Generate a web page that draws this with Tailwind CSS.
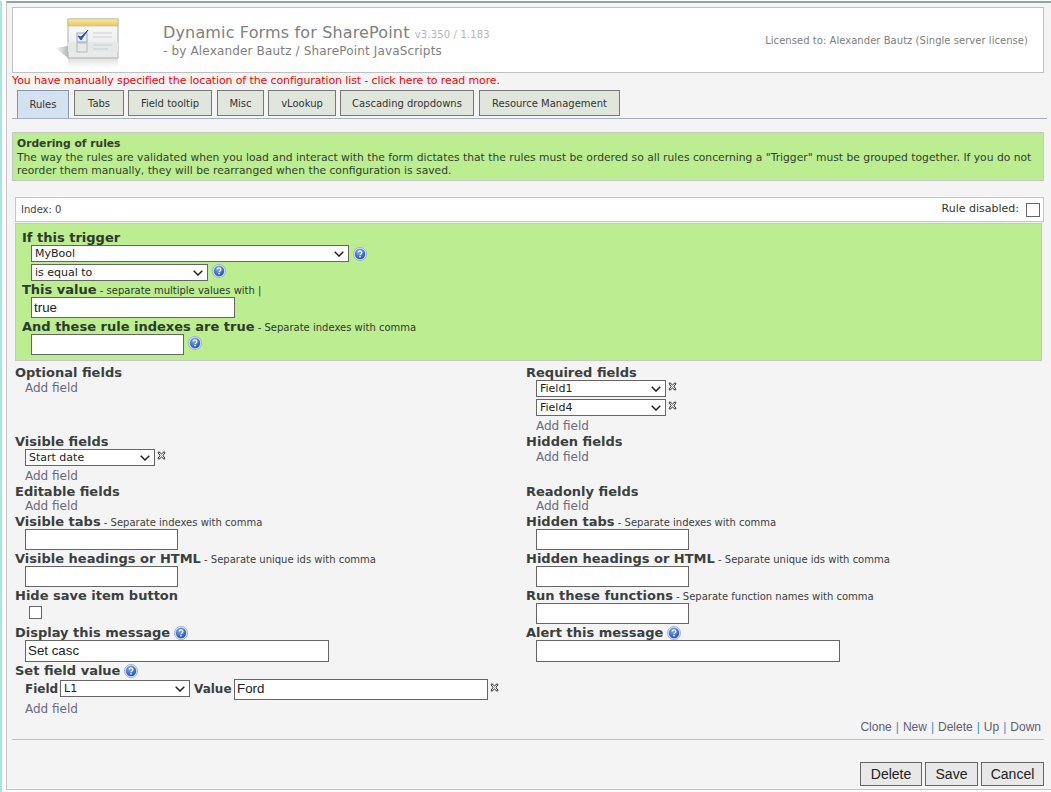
<!DOCTYPE html>
<html lang="en">
<head>
  <meta charset="UTF-8">
  <title>Dynamic Forms for SharePoint</title>
  <script src="https://cdn.jsdelivr.net/npm/@tailwindcss/browser@4"></script>
</head>
<body class="w-[1051px] h-[792px] overflow-hidden bg-white font-['DejaVu_Sans',sans-serif] text-[10px] text-[#333]">
<svg class="absolute w-0 h-0">
  <defs>
    <radialGradient id="helpfill" cx="40%" cy="30%" r="75%"><stop offset="0" stop-color="#7fa8ee"/><stop offset="1" stop-color="#1c4fc0"/></radialGradient>
    <symbol id="help" viewBox="0 0 14 14">
      <circle cx="7" cy="7" r="6.6" fill="#d5e0f4" stroke="#8aa4d4" stroke-width="0.7"/>
      <circle cx="7" cy="7" r="5.2" fill="url(#helpfill)"/>
      <path d="M5.2 5.6C5.2 4.5 6 3.9 7 3.9s1.9.6 1.9 1.6c0 1.5-1.9 1.4-1.9 2.8" fill="none" stroke="#fff" stroke-width="1.3"/>
      <rect x="6.3" y="9" width="1.4" height="1.4" fill="#fff"/>
    </symbol>
    <symbol id="del" viewBox="0 0 9 9">
      <path d="M1 1.5 2 .8 4.5 3 7 .8 8 1.5 6 4.5 8 7.5 7 8.2 4.5 6 2 8.2 1 7.5 3 4.5Z" fill="#fff" stroke="#111" stroke-width="0.9"/>
    </symbol>
  </defs>
</svg>
<div class="w-[1051px] h-[792px] border-l-2 border-[#a9e5e0] pl-1">
  <div class="h-[789px] mt-px border-t-2 border-l border-t-[#8fa5a5] border-l-[#c6c6c6] border-b border-b-[#c6c6c6] bg-[#f4f4f4] pl-[5px]">
    <!-- header -->
    <div class="mt-1 w-[1032px] h-[66px] border border-[#c0c0c0] bg-white flex items-center">
      <svg class="ml-[39px] w-[70px] h-[60px] shrink-0" viewBox="0 0 70 60">
        <defs>
          <linearGradient id="bar" x1="0" y1="0" x2="0" y2="1"><stop offset="0" stop-color="#fbe9a6"/><stop offset="1" stop-color="#e9c65f"/></linearGradient>
          <linearGradient id="card" x1="0" y1="0" x2="0" y2="1"><stop offset="0" stop-color="#fafafa"/><stop offset="1" stop-color="#e6e9e7"/></linearGradient>
          <linearGradient id="shadow" x1="0" y1="0" x2="1" y2="0"><stop offset="0" stop-color="#fff"/><stop offset="1" stop-color="#b4b8b6"/></linearGradient>
          <linearGradient id="reflect" x1="0" y1="0" x2="0" y2="1"><stop offset="0" stop-color="#dde0de"/><stop offset="1" stop-color="#fff"/></linearGradient>
        </defs>
        <path d="M3 38 L16 36 L16 48Z" fill="url(#shadow)"/>
        <rect x="16" y="48" width="50" height="10" fill="url(#reflect)"/>
        <rect x="16" y="9" width="50" height="39" fill="url(#card)" stroke="#a9b2ae" stroke-width="1"/>
        <rect x="16" y="32" width="50" height="10" fill="#e4e8e6"/>
        <rect x="16" y="9" width="50" height="7" fill="url(#bar)" stroke="#cdb77a" stroke-width="0.6"/>
        <rect x="25" y="23" width="10" height="9" fill="#e9eef6" stroke="#9aa9c0"/>
        <path d="M26 26 L29 30 L36 20 L29 27Z" fill="#2c55b8" stroke="#2c55b8"/>
        <rect x="25" y="33" width="10" height="9" fill="#e6e9e7" stroke="#b3b8b6"/>
        <path d="M41 23H60M41 27H60M41 35H60M41 39H56" stroke="#c8ced0" stroke-width="1"/>
      </svg>
      <div class="ml-[41px] w-[600px] text-[#808080]">
        <div class="text-[16px] leading-[19px] whitespace-nowrap tracking-[0.15px]">Dynamic Forms for SharePoint <span class="text-[10px] tracking-[0.15px] text-[#b5b5b5]">v3.350 / 1.183</span></div>
        <div class="text-[12px] leading-[14px] whitespace-nowrap tracking-[0.16px]">- by Alexander Bautz / SharePoint JavaScripts</div>
      </div>
      <div class="ml-auto mr-[15px] mt-[1px] text-[#808080] whitespace-nowrap tracking-[0.04px]">Licensed to: Alexander Bautz (Single server license)</div>
    </div>
    <div class="h-[17px] text-[11px] leading-[14px] pt-px text-[#f00] whitespace-nowrap tracking-[-0.12px]">You have manually specified the location of the configuration list - click here to read more.</div>
    <!-- tabs -->
    <div class="w-[1035px] h-[30px] mt-[-1px] border-b border-[#a7adc6] flex gap-1 pl-[5px] pt-[1px]">
      <div class="w-[52px] h-[28px] border border-b-0 border-[#8a94a8] bg-[#d4e1f1] flex items-center justify-center">Rules</div>
      <div class="ml-px w-[50px] h-[26px] border border-[#777] bg-[#e1e6dc] flex items-center justify-center">Tabs</div>
      <div class="w-[84px] h-[26px] border border-[#777] bg-[#e1e6dc] flex items-center justify-center">Field tooltip</div>
      <div class="ml-px w-[47px] h-[26px] border border-[#777] bg-[#e1e6dc] flex items-center justify-center">Misc</div>
      <div class="w-[68px] h-[26px] border border-[#777] bg-[#e1e6dc] flex items-center justify-center">vLookup</div>
      <div class="w-[134px] h-[26px] border border-[#777] bg-[#e1e6dc] flex items-center justify-center">Cascading dropdowns</div>
      <div class="ml-px w-[141px] h-[26px] border border-[#777] bg-[#e1e6dc] flex items-center justify-center">Resource Management</div>
    </div>
    <!-- notice -->
    <div class="mt-[13px] w-[1032px] h-[49px] border border-[#c6c6c6] bg-[#bced91] px-1 pt-[4px] text-[10.74px] leading-[13px] text-[#2f3f2f]">
      <div class="font-bold leading-[14px]">Ordering of rules</div>
      <div>The way the rules are validated when you load and interact with the form dictates that the rules must be ordered so all rules concerning a "Trigger" must be grouped together. If you do not reorder them manually, they will be rearranged when the configuration is saved.</div>
    </div>
    <!-- rule -->
    <div class="mt-4 ml-[3px] w-[1029px] h-[25px] border border-[#c6c6c6] bg-white flex items-center justify-between pl-[5px] pr-[3px]">
      <span class="text-[#444]">Index: 0</span>
      <span class="flex items-center gap-[7px] text-[11px]">Rule disabled: <span class="w-[14px] h-[14px] border border-[#666] bg-white"></span></span>
    </div>
    <div class="mt-[1px] ml-[3px] w-[1027px] h-[138px] border border-[#c6c6c6] bg-[#bced91] pl-[6px] pt-[7px] text-[#2c3a2c]">
      <div class="text-[13px] font-bold leading-[14px]">If this trigger</div>
      <div class="ml-[9px] flex items-start gap-1 h-[19px]">
        <div class="w-[318px] h-[17px] border border-[#666] bg-white flex items-center justify-between pl-[3px] pt-px pr-[4px] text-[11px] text-[#222]">MyBool<svg class="w-[10px] h-[6px]" viewBox="0 0 10 6"><path d="M.7.7 5 5 9.3.7" fill="none" stroke="#222" stroke-width="1.5"/></svg></div>
        <svg class="w-[14px] h-[14px] mt-[2px]"><use href="#help"/></svg>
      </div>
      <div class="ml-[9px] flex items-start gap-1 h-[17px]">
        <div class="w-[177px] h-[17px] border border-[#666] bg-white flex items-center justify-between pl-[3px] pt-px pr-[4px] text-[11px] text-[#222]">is equal to<svg class="w-[10px] h-[6px]" viewBox="0 0 10 6"><path d="M.7.7 5 5 9.3.7" fill="none" stroke="#222" stroke-width="1.5"/></svg></div>
        <svg class="w-[14px] h-[14px]"><use href="#help"/></svg>
      </div>
      <div class="leading-[15px] mt-px -mb-px"><span class="text-[13px] font-bold">This value</span> - separate multiple values with |</div>
      <div class="ml-[9px] w-[204px] h-[21px] border border-[#666] bg-white pl-[2px] font-['Liberation_Sans',sans-serif] text-[13.33px] leading-[20px] text-[#222]">true</div>
      <div class="leading-[16px] mt-px -mb-[2px]"><span class="text-[13px] font-bold">And these rule indexes are true</span> - Separate indexes with comma</div>
      <div class="ml-[9px] flex items-start gap-1">
        <div class="w-[153px] h-[21px] border border-[#666] bg-white"></div>
        <svg class="w-[14px] h-[14px] mt-[2px]"><use href="#help"/></svg>
      </div>
    </div>
    <!-- field rows -->
    <div class="ml-[3px] grid grid-cols-[511px_512px] text-[#3a3f3f] mt-[4px]">
      <div class="h-[69px]">
        <div class="text-[13px] font-bold leading-[15px]">Optional fields</div>
        <div class="ml-[10px] mt-px text-[12px] leading-[15px] text-[#6b6b80]">Add field</div>
      </div>
      <div class="h-[69px]">
        <div class="text-[13px] font-bold leading-[15px]">Required fields</div>
        <div class="ml-[10px] flex items-start gap-[2px] h-[19px]">
          <div class="w-[130px] h-[17px] border border-[#666] bg-white flex items-center justify-between pl-[3px] pt-px pr-[4px] text-[11px] text-[#222]">Field1<svg class="w-[10px] h-[6px]" viewBox="0 0 10 6"><path d="M.7.7 5 5 9.3.7" fill="none" stroke="#222" stroke-width="1.5"/></svg></div>
          <svg class="w-[9px] h-[9px] mt-[2px]"><use href="#del"/></svg>
        </div>
        <div class="ml-[10px] flex items-start gap-[2px] h-[19px]">
          <div class="w-[130px] h-[17px] border border-[#666] bg-white flex items-center justify-between pl-[3px] pt-px pr-[4px] text-[11px] text-[#222]">Field4<svg class="w-[10px] h-[6px]" viewBox="0 0 10 6"><path d="M.7.7 5 5 9.3.7" fill="none" stroke="#222" stroke-width="1.5"/></svg></div>
          <svg class="w-[9px] h-[9px] mt-[2px]"><use href="#del"/></svg>
        </div>
        <div class="ml-[10px] mt-px text-[12px] leading-[15px] text-[#6b6b80]">Add field</div>
      </div>
      <div class="h-[50px]">
        <div class="text-[13px] font-bold leading-[15px]">Visible fields</div>
        <div class="ml-[10px] flex items-start gap-[2px] h-[20px]">
          <div class="w-[130px] h-[17px] border border-[#666] bg-white flex items-center justify-between pl-[3px] pt-px pr-[4px] text-[11px] text-[#222]">Start date<svg class="w-[10px] h-[6px]" viewBox="0 0 10 6"><path d="M.7.7 5 5 9.3.7" fill="none" stroke="#222" stroke-width="1.5"/></svg></div>
          <svg class="w-[9px] h-[9px] mt-[2px]"><use href="#del"/></svg>
        </div>
        <div class="ml-[10px] text-[12px] leading-[15px] text-[#6b6b80]">Add field</div>
      </div>
      <div class="h-[50px]">
        <div class="text-[13px] font-bold leading-[15px]">Hidden fields</div>
        <div class="ml-[10px] mt-px text-[12px] leading-[15px] text-[#6b6b80]">Add field</div>
      </div>
      <div class="h-[30px]">
        <div class="text-[13px] font-bold leading-[15px]">Editable fields</div>
        <div class="ml-[10px] text-[12px] leading-[15px] text-[#6b6b80]">Add field</div>
      </div>
      <div class="h-[30px]">
        <div class="text-[13px] font-bold leading-[15px]">Readonly fields</div>
        <div class="ml-[10px] text-[12px] leading-[15px] text-[#6b6b80]">Add field</div>
      </div>
      <div class="h-[37px]">
        <div class="leading-[16px] -mb-[2px]"><span class="text-[13px] font-bold">Visible tabs</span> - Separate indexes with comma</div>
        <div class="ml-[10px] w-[153px] h-[21px] border border-[#666] bg-white"></div>
      </div>
      <div class="h-[37px]">
        <div class="leading-[16px] -mb-[2px]"><span class="text-[13px] font-bold">Hidden tabs</span> - Separate indexes with comma</div>
        <div class="ml-[10px] w-[153px] h-[21px] border border-[#666] bg-white"></div>
      </div>
      <div class="h-[37px]">
        <div class="leading-[16px] -mb-[2px]"><span class="text-[13px] font-bold">Visible headings or HTML</span> - Separate unique ids with comma</div>
        <div class="ml-[10px] w-[153px] h-[21px] border border-[#666] bg-white"></div>
      </div>
      <div class="h-[37px]">
        <div class="leading-[16px] -mb-[2px]"><span class="text-[13px] font-bold">Hidden headings or HTML</span> - Separate unique ids with comma</div>
        <div class="ml-[10px] w-[153px] h-[21px] border border-[#666] bg-white"></div>
      </div>
      <div class="h-[37px]">
        <div class="text-[13px] font-bold leading-[15px]">Hide save item button</div>
        <div class="ml-[14px] mt-[3px] w-[13px] h-[13px] border border-[#666] bg-white"></div>
      </div>
      <div class="h-[37px]">
        <div class="leading-[16px] -mb-[2px]"><span class="text-[13px] font-bold">Run these functions</span> - Separate function names with comma</div>
        <div class="ml-[10px] w-[153px] h-[21px] border border-[#666] bg-white"></div>
      </div>
      <div class="h-[38px]">
        <div class="text-[13px] font-bold leading-[15px] flex items-center gap-1">Display this message <svg class="w-[14px] h-[14px]"><use href="#help"/></svg></div>
        <div class="ml-[10px] w-[304px] h-[22px] border border-[#666] bg-white pl-[2px] font-['Liberation_Sans',sans-serif] text-[13.33px] leading-[19px] text-[#222]">Set casc</div>
      </div>
      <div class="h-[38px]">
        <div class="text-[13px] font-bold leading-[15px] flex items-center gap-1">Alert this message <svg class="w-[14px] h-[14px]"><use href="#help"/></svg></div>
        <div class="ml-[10px] w-[304px] h-[22px] border border-[#666] bg-white"></div>
      </div>
      <div class="h-[58px]">
        <div class="text-[13px] font-bold leading-[15px] flex items-center gap-1">Set field value <svg class="w-[14px] h-[14px]"><use href="#help"/></svg></div>
        <div class="ml-[10px] mt-px flex items-start h-[23px]">
          <span class="text-[12px] font-bold leading-[18px] mt-[1px] w-[35px]">Field</span>
          <div class="w-[130px] h-[17px] mt-[1px] border border-[#666] bg-white flex items-center justify-between pl-[3px] pt-px pr-[4px] text-[11px] text-[#222]">L1<svg class="w-[10px] h-[6px]" viewBox="0 0 10 6"><path d="M.7.7 5 5 9.3.7" fill="none" stroke="#222" stroke-width="1.5"/></svg></div>
          <span class="text-[12px] font-bold leading-[18px] mt-[1px] ml-[4px] w-[40px]">Value</span>
          <div class="w-[254px] h-[21px] border border-[#666] bg-white pl-[2px] font-['Liberation_Sans',sans-serif] text-[13.33px] leading-[18px] text-[#222]">Ford</div>
          <svg class="w-[9px] h-[9px] mt-[4px] ml-[2px]"><use href="#del"/></svg>
        </div>
        <div class="ml-[10px] text-[12px] leading-[15px] text-[#6b6b80]">Add field</div>
      </div>
    </div>
    <!-- links -->
    <div class="mt-[-1px] w-[1032px] pr-[3px] h-[19px] flex justify-end gap-[4px] text-[12px] leading-[14px] text-[#606070] font-['Liberation_Sans',sans-serif]">
      <span>Clone</span><span class="text-[#3a8fc8]">|</span><span>New</span><span class="text-[#3a8fc8]">|</span><span>Delete</span><span class="text-[#3a8fc8]">|</span><span>Up</span><span class="text-[#3a8fc8]">|</span><span>Down</span>
    </div>
    <div class="w-[1032px] border-t border-[#c0c0c0]"></div>
    <div class="mt-[22px] w-[1032px] flex justify-end gap-[3px] font-['Liberation_Sans',sans-serif] text-[14px] text-[#222]">
      <div class="w-[62px] h-[24px] border border-[#666] bg-[#e8e8e8] flex items-center justify-center">Delete</div>
      <div class="w-[53px] h-[24px] border border-[#666] bg-[#e8e8e8] flex items-center justify-center">Save</div>
      <div class="w-[63px] h-[24px] border border-[#666] bg-[#e8e8e8] flex items-center justify-center">Cancel</div>
    </div>
  </div>
</div>
</body>
</html>
